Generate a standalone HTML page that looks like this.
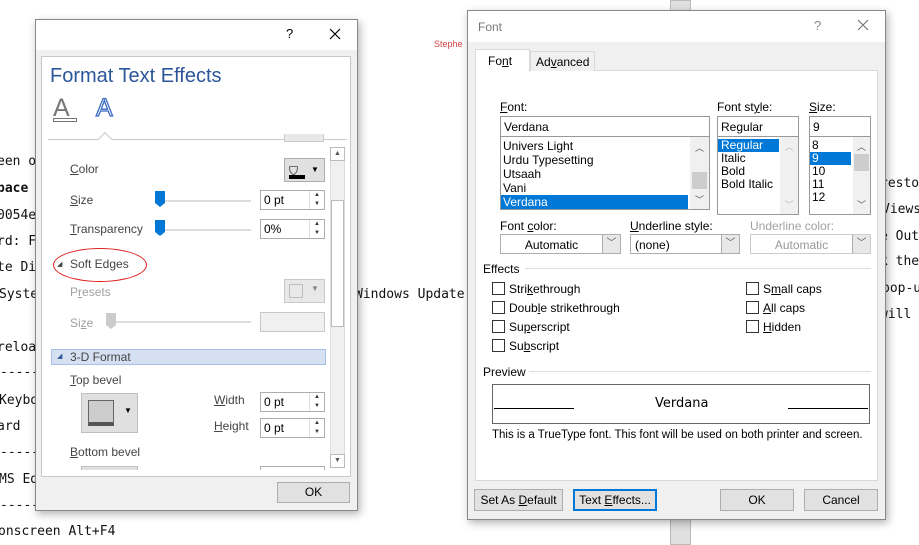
<!DOCTYPE html>
<html><head><meta charset="utf-8"><style>
*{box-sizing:border-box;margin:0;padding:0}
body{width:919px;height:545px;position:relative;overflow:hidden;background:#fff;font-family:"Liberation Sans",sans-serif;font-size:12px;color:#000}
.a{position:absolute;white-space:nowrap}
.m{font-family:"DejaVu Sans Mono","Liberation Mono",monospace;font-size:13px;color:#111}
.dlg{position:absolute;background:#f0f0f0;border:1px solid #888;box-shadow:2px 3px 8px rgba(0,0,0,.3)}
.box{position:absolute;background:#fff;border:1px solid #adadad}
.btn{position:absolute;background:#e1e1e1;border:1px solid #adadad;text-align:center;line-height:20px}
.spin{position:absolute;right:0;top:0;width:15px;height:100%;border-left:1px solid #ddd;font-size:6px;line-height:9px;text-align:center;color:#333}
.chk{position:absolute;width:13px;height:13px;border:1px solid #333;background:#fff}
.dd{position:absolute;right:0;top:0;width:18px;height:100%;background:#e8e8e8;border-left:1px solid #adadad;text-align:center;color:#555;font-size:10px;line-height:17px}
.sel{background:#0078d7;color:#fff}
u{text-decoration:underline}
.g{color:#a0a0a0}
</style></head><body>
<div class="a m" style="left:-3px;top:154px">een o</div>
<div class="a m" style="left:-3px;top:181px;font-weight:bold">pace</div>
<div class="a m" style="left:-3px;top:208px">0054e</div>
<div class="a m" style="left:-3px;top:234px">rd: Fr</div>
<div class="a m" style="left:-3px;top:260px">te Dis</div>
<div class="a m" style="left:-1px;top:287px">Syste</div>
<div class="a m" style="left:-3px;top:340px">reload</div>
<div class="a m" style="left:0;top:365px">-------</div>
<div class="a m" style="left:-1px;top:393px">Keybo</div>
<div class="a m" style="left:-3px;top:419px">ard</div>
<div class="a m" style="left:0;top:445px">-------</div>
<div class="a m" style="left:-1px;top:472px">MS Ed</div>
<div class="a m" style="left:0;top:498px">-------</div>
<div class="a m" style="left:-2px;top:524px">onscreen Alt+F4</div>
<div class="a m" style="left:355px;top:287px">Windows Update</div>
<div class="a m" style="left:880px;top:176px">resto</div>
<div class="a m" style="left:882px;top:202px">Views</div>
<div class="a m" style="left:880px;top:229px">e Out</div>
<div class="a m" style="left:880px;top:254px">k the</div>
<div class="a m" style="left:882px;top:281px">pop-u</div>
<div class="a m" style="left:880px;top:307px">will op</div>
<div class="a" style="left:434px;top:39px;font-size:9px;color:#d04040">Stephe</div>
<div class="a" style="left:670px;top:0;width:21px;height:12px;background:#e0e0e0;border:1px solid #bbb"></div>
<div class="a" style="left:670px;top:518px;width:21px;height:27px;background:#e0e0e0;border:1px solid #bbb"></div>

<div class="dlg" style="left:35px;top:19px;width:323px;height:492px">
 <div class="a" style="left:0;top:0;width:321px;height:30px;background:#fff"></div>
 <div class="a" style="left:250px;top:6px;font-size:13px">?</div>
 <svg class="a" style="left:293px;top:8px" width="12" height="12"><path d="M1 1L11 11M11 1L1 11" stroke="#000" stroke-width="1.2"/></svg>
 <div class="a" style="left:5px;top:36px;width:310px;height:421px;background:#fff;border:1px solid #c8c8c8"></div>
 <div class="a" style="left:14px;top:45px;font-size:20px;color:#2b579a">Format Text Effects</div>
 <div class="a" style="left:17px;top:74px;font-size:25px;color:#777">A</div>
 <div class="a" style="left:17px;top:98px;width:24px;height:4px;border:1px solid #777"></div>
 <div class="a" style="left:60px;top:74px;font-size:25px;color:#fff;-webkit-text-stroke:1.3px #3b6bc4">A</div>
 <div class="a" style="left:12px;top:119px;width:299px;height:1px;background:#c8c8c8"></div>
 <div class="a" style="left:64px;top:114px;width:10px;height:10px;background:#fff;border-left:1px solid #c8c8c8;border-top:1px solid #c8c8c8;transform:rotate(45deg)"></div>
 <div class="a" style="left:248px;top:114px;width:40px;height:8px;background:#e8e8e8;border:1px solid #c8c8c8;border-top:none"></div>
 <div class="a" style="left:34px;top:142px;color:#444"><u>C</u>olor</div>
 <div class="btn" style="left:248px;top:138px;width:41px;height:24px;background:#e0e0e0"><span style="position:absolute;left:4px;top:2px;font-size:12px">⛉</span><span style="position:absolute;left:4px;top:16px;width:16px;height:4px;background:#000"></span><span style="position:absolute;left:26px;top:1px;font-size:8px">▼</span></div>
 <div class="a" style="left:34px;top:173px;color:#444"><u>S</u>ize</div>
 <div class="a" style="left:120px;top:180px;width:95px;height:2px;background:#ddd"></div>
 <div class="a" style="left:119px;top:171px;width:10px;height:16px;background:#0078d7;clip-path:polygon(0 0,100% 0,100% 75%,50% 100%,0 75%)"></div>
 <div class="box" style="left:224px;top:170px;width:65px;height:20px;padding:2px 3px">0 pt<div class="spin">▲<br>▼</div></div>
 <div class="a" style="left:34px;top:202px;color:#444"><u>T</u>ransparency</div>
 <div class="a" style="left:120px;top:209px;width:95px;height:2px;background:#ddd"></div>
 <div class="a" style="left:119px;top:200px;width:10px;height:16px;background:#0078d7;clip-path:polygon(0 0,100% 0,100% 75%,50% 100%,0 75%)"></div>
 <div class="box" style="left:224px;top:199px;width:65px;height:20px;padding:2px 3px">0%<div class="spin">▲<br>▼</div></div>
 <div class="a" style="left:17px;top:228px;width:94px;height:34px;border:1px solid #e02020;border-radius:50%"></div>
 <div class="a" style="left:21px;top:240px;font-size:7px;color:#444">◢</div>
 <div class="a" style="left:34px;top:237px;color:#444">Soft Edges</div>
 <div class="a g" style="left:34px;top:265px">P<u>r</u>esets</div>
 <div class="a" style="left:248px;top:259px;width:41px;height:24px;background:#e8e8e8;border:1px solid #c8c8c8"><span style="position:absolute;left:4px;top:4px;width:14px;height:14px;border:1px solid #bbb"></span><span style="position:absolute;left:26px;top:4px;font-size:8px;color:#888">▼</span></div>
 <div class="a g" style="left:34px;top:296px">Si<u>z</u>e</div>
 <div class="a" style="left:72px;top:301px;width:143px;height:2px;background:#ddd"></div>
 <div class="a" style="left:70px;top:293px;width:10px;height:16px;background:#ccc;clip-path:polygon(0 0,100% 0,100% 75%,50% 100%,0 75%)"></div>
 <div class="a" style="left:224px;top:292px;width:65px;height:20px;background:#f0f0f0;border:1px solid #c8c8c8"></div>
 <div class="a" style="left:15px;top:329px;width:275px;height:16px;background:#d5e1f2;border:1px solid #a7c0e8"></div>
 <div class="a" style="left:21px;top:332px;font-size:7px;color:#2b579a">◢</div>
 <div class="a" style="left:34px;top:330px;color:#444">3-D Format</div>
 <div class="a" style="left:34px;top:353px;color:#444"><u>T</u>op bevel</div>
 <div class="a" style="left:45px;top:373px;width:57px;height:40px;background:#e0e0e0;border:1px solid #c0c0c0"><span style="position:absolute;left:6px;top:6px;width:26px;height:26px;background:#ccc;border:1px solid #666;border-bottom:4px solid #555"></span><span style="position:absolute;left:42px;top:12px;font-size:8px">▼</span></div>
 <div class="a" style="left:178px;top:373px;color:#444"><u>W</u>idth</div>
 <div class="box" style="left:224px;top:372px;width:65px;height:20px;padding:2px 3px">0 pt<div class="spin">▲<br>▼</div></div>
 <div class="a" style="left:178px;top:399px;color:#444"><u>H</u>eight</div>
 <div class="box" style="left:224px;top:398px;width:65px;height:20px;padding:2px 3px">0 pt<div class="spin">▲<br>▼</div></div>
 <div class="a" style="left:34px;top:425px;color:#444"><u>B</u>ottom bevel</div>
 <div class="a" style="left:45px;top:446px;width:57px;height:4px;background:#e0e0e0;border:1px solid #c0c0c0;border-bottom:none"></div>
 <div class="a" style="left:224px;top:446px;width:65px;height:4px;border:1px solid #adadad;border-bottom:none"></div>
 <div class="a" style="left:294px;top:127px;width:15px;height:321px;background:#f0f0f0;border:1px solid #ddd"></div>
 <div class="a" style="left:294px;top:127px;width:15px;height:14px;background:#fff;border:1px solid #bbb;font-size:7px;text-align:center;line-height:12px;color:#555">▲</div>
 <div class="a" style="left:295px;top:180px;width:13px;height:127px;background:#fff;border:1px solid #bbb"></div>
 <div class="a" style="left:294px;top:434px;width:15px;height:14px;background:#fff;border:1px solid #bbb;font-size:7px;text-align:center;line-height:12px;color:#555">▼</div>
 <div class="btn" style="left:241px;top:462px;width:73px;height:21px;line-height:19px">OK</div>
</div>

<div class="dlg" style="left:467px;top:10px;width:419px;height:510px">
 <div class="a" style="left:0;top:0;width:417px;height:31px;background:#fff"></div>
 <div class="a" style="left:10px;top:9px;color:#777">Font</div>
 <div class="a" style="left:346px;top:7px;font-size:13px;color:#888">?</div>
 <svg class="a" style="left:389px;top:8px" width="12" height="12"><path d="M1 1L11 11M11 1L1 11" stroke="#777" stroke-width="1.2"/></svg>
 <div class="a" style="left:7px;top:59px;width:403px;height:411px;background:#fff;border:1px solid #d9d9d9"></div>
 <div class="a" style="left:7px;top:38px;width:55px;height:23px;background:#fff;border:1px solid #d9d9d9;border-bottom:none"></div>
 <div class="a" style="left:20px;top:43px"><span>Fo<u>n</u>t</span></div>
 <div class="a" style="left:62px;top:40px;width:65px;height:20px;background:#f0f0f0;border:1px solid #d9d9d9;border-bottom:none"></div>
 <div class="a" style="left:68px;top:44px">Ad<u>v</u>anced</div>
 <div class="a" style="left:32px;top:89px"><u>F</u>ont:</div>
 <div class="a" style="left:249px;top:89px">Font st<u>y</u>le:</div>
 <div class="a" style="left:341px;top:89px"><u>S</u>ize:</div>
 <div class="box" style="left:32px;top:105px;width:210px;height:21px;padding:3px 3px;border-color:#999">Verdana</div>
 <div class="box" style="left:249px;top:105px;width:82px;height:21px;padding:3px 3px;border-color:#999">Regular</div>
 <div class="box" style="left:341px;top:105px;width:62px;height:21px;padding:3px 3px;border-color:#999">9</div>
 <div class="box" style="left:32px;top:125px;width:210px;height:74px;border-color:#999;line-height:14px;padding-top:2px">
  <div style="padding-left:2px">Univers Light</div><div style="padding-left:2px">Urdu Typesetting</div><div style="padding-left:2px">Utsaah</div><div style="padding-left:2px">Vani</div><div class="sel" style="width:187px;padding-left:2px">Verdana</div>
  <div style="position:absolute;right:0;top:0;width:19px;height:100%;background:#f0f0f0"><div style="position:absolute;top:4px;width:100%;text-align:center;font-size:9px;color:#555">︿</div><div style="position:absolute;top:35px;left:2px;width:15px;height:17px;background:#cdcdcd"></div><div style="position:absolute;bottom:2px;width:100%;text-align:center;font-size:9px;color:#555">﹀</div></div>
 </div>
 <div class="box" style="left:249px;top:125px;width:82px;height:79px;border-color:#999;line-height:13px;padding-top:2px">
  <div class="sel" style="width:61px;padding-left:3px">Regular</div><div style="padding-left:3px">Italic</div><div style="padding-left:3px">Bold</div><div style="padding-left:3px">Bold Italic</div>
  <div style="position:absolute;right:0;top:0;width:18px;height:100%;background:#f0f0f0"><div style="position:absolute;top:4px;width:100%;text-align:center;font-size:9px;color:#bbb">︿</div><div style="position:absolute;bottom:2px;width:100%;text-align:center;font-size:9px;color:#bbb">﹀</div></div>
 </div>
 <div class="box" style="left:341px;top:125px;width:62px;height:79px;border-color:#999;line-height:13px;padding-top:2px">
  <div style="padding-left:2px">8</div><div class="sel" style="width:41px;padding-left:2px">9</div><div style="padding-left:2px">10</div><div style="padding-left:2px">11</div><div style="padding-left:2px">12</div>
  <div style="position:absolute;right:0;top:0;width:17px;height:100%;background:#f0f0f0"><div style="position:absolute;top:4px;width:100%;text-align:center;font-size:9px;color:#555">︿</div><div style="position:absolute;top:17px;left:1px;width:15px;height:17px;background:#cdcdcd"></div><div style="position:absolute;bottom:2px;width:100%;text-align:center;font-size:9px;color:#555">﹀</div></div>
 </div>
 <div class="a" style="left:32px;top:208px">Font <u>c</u>olor:</div>
 <div class="a" style="left:162px;top:208px"><u>U</u>nderline style:</div>
 <div class="a g" style="left:282px;top:208px">Underline color:</div>
 <div class="box" style="left:32px;top:223px;width:121px;height:20px;text-align:center;padding:3px 18px 0 0">Automatic<div class="dd">﹀</div></div>
 <div class="box" style="left:162px;top:223px;width:110px;height:20px;padding:3px 4px 0">(none)<div class="dd">﹀</div></div>
 <div class="box" style="left:282px;top:223px;width:121px;height:20px;text-align:center;padding:3px 18px 0 0;color:#999;border-color:#ccc">Automatic<div class="dd">﹀</div></div>
 <div class="a" style="left:15px;top:251px">Effects</div>
 <div class="a" style="left:57px;top:257px;width:346px;height:1px;background:#ddd"></div>
 <div class="chk" style="left:24px;top:271px"></div><div class="a" style="left:41px;top:271px">Stri<u>k</u>ethrough</div>
 <div class="chk" style="left:24px;top:290px"></div><div class="a" style="left:41px;top:290px">Doub<u>l</u>e strikethrough</div>
 <div class="chk" style="left:24px;top:309px"></div><div class="a" style="left:41px;top:309px">Su<u>p</u>erscript</div>
 <div class="chk" style="left:24px;top:328px"></div><div class="a" style="left:41px;top:328px">Su<u>b</u>script</div>
 <div class="chk" style="left:278px;top:271px"></div><div class="a" style="left:295px;top:271px">S<u>m</u>all caps</div>
 <div class="chk" style="left:278px;top:290px"></div><div class="a" style="left:295px;top:290px"><u>A</u>ll caps</div>
 <div class="chk" style="left:278px;top:309px"></div><div class="a" style="left:295px;top:309px"><u>H</u>idden</div>
 <div class="a" style="left:15px;top:354px">Preview</div>
 <div class="a" style="left:61px;top:360px;width:342px;height:1px;background:#ddd"></div>
 <div class="a" style="left:24px;top:373px;width:378px;height:40px;background:#fff;border:1px solid #666"></div>
 <div class="a" style="left:26px;top:397px;width:80px;height:1px;background:#000"></div>
 <div class="a" style="left:320px;top:397px;width:80px;height:1px;background:#000"></div>
 <div class="a" style="left:187px;top:385px;font-family:'DejaVu Sans',sans-serif;font-size:13px">Verdana</div>
 <div class="a" style="left:24px;top:418px;font-size:11.5px">This is a TrueType font. This font will be used on both printer and screen.</div>
 <div class="btn" style="left:6px;top:478px;width:89px;height:22px">Set As <u>D</u>efault</div>
 <div class="btn" style="left:105px;top:478px;width:84px;height:22px;border:2px solid #0078d7;line-height:18px">Text <u>E</u>ffects...</div>
 <div class="btn" style="left:252px;top:478px;width:74px;height:22px">OK</div>
 <div class="btn" style="left:336px;top:478px;width:74px;height:22px">Cancel</div>
</div>
</body></html>
